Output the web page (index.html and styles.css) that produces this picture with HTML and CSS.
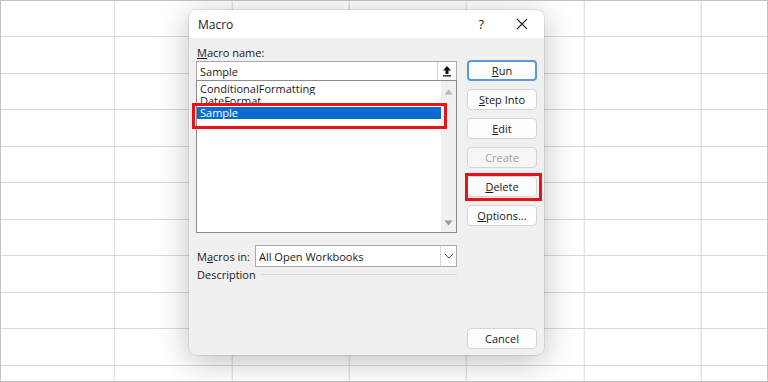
FILE: index.html
```html
<!DOCTYPE html>
<html>
<head>
<meta charset="utf-8">
<link rel="stylesheet" href="styles.css">
</head>
<body>
<div class="sheet">
  <div class="dialog">
    <div class="titlebar">
      <span class="title">Macro</span>
      <span class="help">?</span>
      <svg class="close" width="12" height="12" viewBox="0 0 12 12"><path d="M1 1L11 11M11 1L1 11" stroke="#222" stroke-width="1.1" fill="none"/></svg>
    </div>
    <div class="content">
      <div class="leftcol">
        <div class="label"><u>M</u>acro name:</div>
        <div class="namebox">
          <span class="nameval">Sample</span>
          <span class="upbtn"><svg width="10" height="12" viewBox="0 0 10 12"><path d="M5 1L1 5.5H3.5V9H6.5V5.5H9Z" fill="#111"/><rect x="1" y="10.2" width="8" height="1.3" fill="#111"/></svg></span>
        </div>
        <div class="listbox">
          <div class="items">
            <div class="item">ConditionalFormatting</div>
            <div class="item">DateFormat</div>
            <div class="item sel">Sample</div>
          </div>
          <div class="scroll">
            <svg width="9" height="6" viewBox="0 0 9 6"><path d="M4.5 0.5L8.5 5.5H0.5Z" fill="#b4b4b4"/></svg>
            <svg width="9" height="6" viewBox="0 0 9 6"><path d="M0.5 0.5H8.5L4.5 5.5Z" fill="#9a9a9a"/></svg>
          </div>
        </div>
        <div class="inrow">
          <span class="inlabel">M<u>a</u>cros in:</span>
          <div class="select">
            <span class="selval">All Open Workbooks</span>
            <span class="chev"><svg width="10" height="6" viewBox="0 0 10 6"><path d="M1 1L5 5L9 1" stroke="#555" stroke-width="1" fill="none"/></svg></span>
          </div>
        </div>
        <div class="descrow">
          <span>Description</span>
          <span class="rule"></span>
        </div>
      </div>
      <div class="rightcol">
        <button class="btn default"><u>R</u>un</button>
        <button class="btn"><u>S</u>tep Into</button>
        <button class="btn"><u>E</u>dit</button>
        <button class="btn disabled">Create</button>
        <button class="btn"><u>D</u>elete</button>
        <button class="btn"><u>O</u>ptions...</button>
        <button class="btn cancel">Cancel</button>
      </div>
    </div>
  </div>
  <div class="mark mark-sample"></div>
  <div class="mark mark-delete"></div>
</div>
</body>
</html>
```
FILE: styles.css
```css
html, body {
  margin: 0;
  padding: 0;
}
body {
  width: 768px;
  height: 382px;
  overflow: hidden;
  font-family: "Open Sans", "Noto Sans", sans-serif;
  font-size: 11px;
  color: #1a1a1a;
}
.sheet {
  position: relative;
  width: 766px;
  height: 380px;
  border: 1px solid #c4c4c4;
  background-color: #fff;
  background-image:
    repeating-linear-gradient(to right, transparent 0 116.3px, #d9d9d9 116.3px 117.3px),
    repeating-linear-gradient(to bottom, transparent 0 35.2px, #d9d9d9 35.2px 36.5px);
  background-position: -3.3px 0, 0 0;
}
.dialog {
  position: absolute;
  left: 188px;
  top: 9px;
  width: 355px;
  height: 345px;
  background: #f0f0f0;
  border-radius: 8px;
  box-shadow: 0 6px 32px rgba(0,0,0,0.26), 0 0 0 1px rgba(0,0,0,0.08);
  display: flex;
  flex-direction: column;
  overflow: hidden;
}
.titlebar {
  height: 28px;
  background: #fff;
  display: flex;
  align-items: center;
  padding: 0 16px 0 9px;
  flex: none;
}
.title {
  font-size: 12px;
  flex: 1;
  color: #222;
}
.help {
  font-size: 13px;
  margin-right: 32px;
  color: #222;
}
.content {
  flex: 1;
  display: flex;
  gap: 10px;
  padding: 8px 7px 6px 7px;
}
.leftcol {
  width: 261px;
  display: flex;
  flex-direction: column;
}
.label {
  height: 14px;
  line-height: 14px;
  padding-left: 1px;
}
.namebox {
  margin-top: 1px;
  height: 18px;
  border: 1px solid #a8a8a8;
  border-bottom: none;
  background: #fff;
  display: flex;
  align-items: center;
}
.nameval {
  flex: 1;
  padding-left: 3px;
}
.upbtn {
  width: 18px;
  height: 18px;
  border-left: 1px solid #d6d6d6;
  display: flex;
  align-items: center;
  justify-content: center;
}
.listbox {
  height: 151px;
  border: 1px solid #8c8c8c;
  background: #fff;
  display: flex;
}
.items {
  flex: 1;
  padding-top: 2px;
}
.item {
  height: 12px;
  line-height: 12px;
  padding-left: 3px;
  overflow: hidden;
}
.item.sel {
  background: #0b6bce;
  color: #fff;
  height: 12px;
  margin-left: 0;
}
.scroll {
  width: 15px;
  background: #f0f0f0;
  display: flex;
  flex-direction: column;
  justify-content: space-between;
  align-items: center;
  padding: 8px 0 6px;
}
.inrow {
  margin-top: 12px;
  display: flex;
  align-items: center;
}
.inlabel {
  width: 58px;
  padding-left: 1px;
}
.select {
  width: 200px;
  height: 20px;
  border: 1px solid #a8a8a8;
  background: #fff;
  display: flex;
  align-items: center;
}
.selval {
  flex: 1;
  padding-left: 3px;
}
.chev {
  width: 15px;
  height: 20px;
  border-left: 1px solid #d6d6d6;
  display: flex;
  align-items: center;
  justify-content: center;
}
.descrow {
  margin-top: 0;
  display: flex;
  align-items: center;
  gap: 5px;
  padding-left: 1px;
  height: 14px;
}
.rule {
  flex: 1;
  height: 1px;
  background: #dadada;
}
.rightcol {
  width: 70px;
  display: flex;
  flex-direction: column;
  gap: 8px;
  padding-top: 14px;
}
.btn {
  height: 21px;
  width: 70px;
  font-family: inherit;
  font-size: 11px;
  color: #1a1a1a;
  background: #fdfdfd;
  border: 1px solid #d4d4d4;
  border-radius: 4px;
  padding: 0;
  display: flex;
  align-items: center;
  justify-content: center;
}
.btn.default {
  border: 2px solid #5a9ad8;
}
.btn.disabled {
  color: #a0a0a0;
  background: #f6f6f6;
}
.btn.cancel {
  margin-top: auto;
}
.mark {
  position: absolute;
  border: 3px solid #e8131a;
  box-sizing: border-box;
}
.mark-sample {
  left: 191px;
  top: 102px;
  width: 255px;
  height: 26px;
}
.mark-delete {
  left: 464px;
  top: 172px;
  width: 77px;
  height: 28px;
}
```
